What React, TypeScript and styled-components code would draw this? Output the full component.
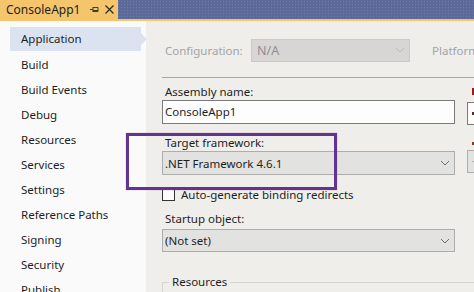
import React from "react";
import styled, { createGlobalStyle, css } from "styled-components";

const Global = createGlobalStyle`
  html, body { margin: 0; padding: 0; }
  body {
    width: 474px; height: 292px; overflow: hidden;
    font-family: "Noto Sans", "Open Sans", sans-serif;
    font-size: 11.5px; color: #1e1e1e;
  }
  * { box-sizing: border-box; }
`;

const Window = styled.div`
  width: 474px; height: 292px; display: flex; flex-direction: column; overflow: hidden; position: relative;
`;

const TabStrip = styled.div`
  height: 21px; flex: none; display: flex;
  background-color: #5d6a99;
  background-image: radial-gradient(#6f7cab 0.6px, transparent 0.7px);
  background-size: 3px 3px;
  background-position: 0 6px;
  border-bottom: 2px solid #f5c56c;
`;

const Tab = styled.div`
  width: 118px; height: 21px; background: #f5c56c; display: flex; align-items: center;
  padding-left: 6px; gap: 0; color: #1e1e1e; font-size: 12px; margin-bottom: -2px;
`;

const TabTitle = styled.span`
  width: 81px; line-height: 19px; margin-top: -2px;
`;

const TabIcon = styled.span`
  width: 15px; height: 16px; display: flex; align-items: center; justify-content: center; margin-top: -2px;
`;

const Body = styled.div`
  flex: 1; display: flex; min-height: 0;
`;

const Nav = styled.nav`
  width: 146px; flex: none; background: #fafafa; padding-top: 6px; padding-left: 10px;
  display: flex; flex-direction: column; position: relative; z-index: 1;
`;

const NavItem = styled.div<{ $selected?: boolean }>`
  height: 25px; line-height: 25px; padding-left: 11px; width: 131px; position: relative; flex: none;
  ${(p) => p.$selected && css`
    background: #dce3f0;
    height: 24px; line-height: 24px; margin-bottom: 1px;
    &::after {
      content: ""; position: absolute; right: -6px; top: 6px;
      border-top: 6px solid transparent; border-bottom: 6px solid transparent;
      border-left: 6px solid #dce3f0;
    }
  `}
`;

const Content = styled.div`
  flex: 1; background: #efeeeb; padding: 18px 0 0 16px; overflow: hidden; position: relative;
`;

const ConfigRow = styled.div`
  display: flex; align-items: center; height: 22px; white-space: nowrap;
`;

const MutedLabel = styled.span<{ $w?: number; $pl?: number }>`
  color: #a3a3a3; padding-left: ${(p) => p.$pl ?? 3}px; width: ${(p) => p.$w ?? 89}px; flex: none;
`;

const Combo = styled.div<{ $disabled?: boolean; $w?: number; $h?: number; $mt?: number }>`
  width: ${(p) => p.$w ?? 293}px; height: ${(p) => p.$h ?? 23}px; flex: none;
  margin-top: ${(p) => p.$mt ?? 0}px;
  display: flex; align-items: center; justify-content: space-between;
  padding: 0 4px 0 2px;
  background: ${(p) => (p.$disabled ? "#d7d6d4" : "#e2e2e1")};
  border: 1px solid ${(p) => (p.$disabled ? "#cbcac8" : "#adadad")};
  color: ${(p) => (p.$disabled ? "#8f8f8f" : "#1e1e1e")};
`;

const ComboText = styled.span<{ $pad?: number }>`
  padding-left: ${(p) => p.$pad ?? 0}px; font-size: ${(p) => (p.$pad ? 12.5 : 11.5)}px;
`;

const Separator = styled.div`
  height: 1px; background: #a8a8a8; margin-top: 16px; margin-right: -20px;
`;

const Grid = styled.div`
  display: grid; grid-template-columns: 293px 20px; column-gap: 12px; margin-top: 6px;
`;

const Column = styled.div`
  display: flex; flex-direction: column;
`;

const Label = styled.div<{ $mt?: number }>`
  line-height: 16px; padding-left: 3px; margin-top: ${(p) => p.$mt ?? 0}px;
`;

const TextBox = styled.div`
  width: 293px; height: 24px; background: #fdfdfd; border: 1px solid #7a7a7a;
  padding-left: 2px; line-height: 22px;
`;

const CheckRow = styled.div`
  display: flex; align-items: center; margin-top: 13px; gap: 6px; height: 13px;
`;

const CheckBox = styled.span`
  width: 13px; height: 13px; border: 1px solid #333; background: #fbfbfb; flex: none;
`;

const Group = styled.div`
  margin-top: 30px; margin-right: -20px; border-top: 1px solid #d5d5d3; border-left: 1px solid #d5d5d3; height: 30px;
  position: relative;
`;

const GroupLabel = styled.span`
  position: absolute; left: 6px; top: -9px; background: #efeeeb; padding: 0 3px; line-height: 16px;
`;

const Mark = styled.div<{ $c: string; $mt: number; $w?: number; $h?: number; $ml?: number }>`
  width: ${(p) => p.$w ?? 3}px; height: ${(p) => p.$h ?? 5}px; background: ${(p) => p.$c};
  margin-top: ${(p) => p.$mt}px; margin-left: ${(p) => p.$ml ?? 5}px;
`;

const SideBox = styled.div<{ $mt: number; $bg: string; $bc: string }>`
  height: 23px; margin-top: ${(p) => p.$mt}px; background: ${(p) => p.$bg}; border: 1px solid ${(p) => p.$bc};
  display: flex; align-items: center; padding-left: 3px;
`;

const Highlight = styled.div`
  position: absolute; left: 126px; top: 133px; width: 211px; height: 57px; z-index: 5;
  border: 3px solid #62338f; pointer-events: none;
  box-shadow: 0 0 1px rgba(60, 20, 90, 0.4);
`;

const Chevron = () => (
  <svg width="10" height="6" viewBox="0 0 10 6">
    <path d="M1 1 L5 5 L9 1" fill="none" stroke="#6d6d6d" strokeWidth="1" />
  </svg>
);

const navItems = [
  "Application", "Build", "Build Events", "Debug", "Resources", "Services",
  "Settings", "Reference Paths", "Signing", "Security", "Publish",
];

export default function App() {
  return (
    <Window>
      <Global />
      <TabStrip>
        <Tab>
          <TabTitle>ConsoleApp1</TabTitle>
          <TabIcon>
            <svg width="9" height="7" viewBox="0 0 9 7">
              <path d="M0 3.5 H3 M3 1 V6 M3 1.5 H8 V5.5 H3 M3 4.5 H8" fill="none" stroke="#3b3b3b" strokeWidth="1" />
            </svg>
          </TabIcon>
          <TabIcon>
            <svg width="9" height="9" viewBox="0 0 9 9">
              <path d="M0.5 0.5 L8.5 8.5 M8.5 0.5 L0.5 8.5" stroke="#2b2b2b" strokeWidth="1.2" />
            </svg>
          </TabIcon>
        </Tab>
      </TabStrip>
      <Body>
        <Nav>
          {navItems.map((n, i) => (
            <NavItem key={n} $selected={i === 0}>{n}</NavItem>
          ))}
        </Nav>
        <Content>
          <ConfigRow>
            <MutedLabel>Configuration:</MutedLabel>
            <Combo $disabled $w={159}>
              <ComboText $pad={3}>N/A</ComboText>
              <svg width="10" height="6" viewBox="0 0 10 6">
                <path d="M1 1 L5 5 L9 1" fill="none" stroke="#b9b9b9" strokeWidth="1" />
              </svg>
            </Combo>
            <MutedLabel $w={80} $pl={22}>Platform:</MutedLabel>
          </ConfigRow>
          <Separator />
          <Grid>
            <Column>
              <Label>Assembly name:</Label>
              <TextBox>ConsoleApp1</TextBox>
              <Label $mt={11}>Target framework:</Label>
              <Combo $w={293} $h={24}>
                <span>.NET Framework 4.6.1</span>
                <Chevron />
              </Combo>
              <CheckRow>
                <CheckBox />
                <span>Auto-generate binding redirects</span>
              </CheckRow>
              <Label $mt={10}>Startup object:</Label>
              <Combo $w={293} $h={23} $mt={2}>
                <span>(Not set)</span>
                <Chevron />
              </Combo>
            </Column>
            <Column>
              <Mark $c="#9b1c1c" $mt={4} $w={3} $h={7} />
              <SideBox $mt={7} $bg="#fdfdfd" $bc="#7a7a7a">
                <Mark $c="#5a2a2a" $mt={0} $w={3} $h={3} $ml={1} />
              </SideBox>
              <Mark $c="#8a3a1a" $mt={17} $w={3} $h={3} />
              <SideBox $mt={5} $bg="#e2e2e1" $bc="#adadad">
                <Mark $c="#c9b46a" $mt={0} $w={4} $h={1} $ml={1} />
              </SideBox>
            </Column>
          </Grid>
          <Group>
            <GroupLabel>Resources</GroupLabel>
          </Group>
        </Content>
      </Body>
      <Highlight />
    </Window>
  );
}
